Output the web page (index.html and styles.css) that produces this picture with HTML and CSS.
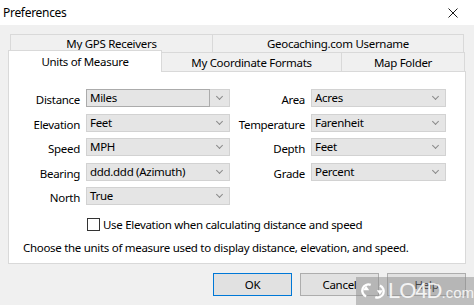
FILE: index.html
```html
<!DOCTYPE html>
<html lang="en">
<head>
    <meta charset="UTF-8">
    <title>Preferences</title>
    <link rel="stylesheet" href="styles.css">
</head>
<body>
    <div class="titlebar">
        <span class="title">Preferences</span>
        <svg class="close" width="10" height="10" viewBox="0 0 10 10">
            <path d="M0.5 0.5 L9.5 9.5 M9.5 0.5 L0.5 9.5" stroke="#1a1a1a" stroke-width="1" fill="none"/>
        </svg>
    </div>

    <div class="dialog">
        <div class="tab-row top">
            <div class="tab gps">My GPS Receivers</div>
            <div class="tab geo">Geocaching.com Username</div>
        </div>
        <div class="tab-row bottom">
            <div class="tab units active">Units of Measure</div>
            <div class="tab coords">My Coordinate Formats</div>
            <div class="tab folder">Map Folder</div>
        </div>

        <div class="panel">
            <div class="form">
                <div class="label">Distance</div>
                <div class="select focused"><span class="value">Miles</span><span class="arrow"></span></div>
                <div class="label">Area</div>
                <div class="select"><span class="value">Acres</span><span class="arrow"></span></div>

                <div class="label">Elevation</div>
                <div class="select"><span class="value">Feet</span><span class="arrow"></span></div>
                <div class="label">Temperature</div>
                <div class="select"><span class="value">Farenheit</span><span class="arrow"></span></div>

                <div class="label">Speed</div>
                <div class="select"><span class="value">MPH</span><span class="arrow"></span></div>
                <div class="label">Depth</div>
                <div class="select"><span class="value">Feet</span><span class="arrow"></span></div>

                <div class="label">Bearing</div>
                <div class="select"><span class="value">ddd.ddd (Azimuth)</span><span class="arrow"></span></div>
                <div class="label">Grade</div>
                <div class="select"><span class="value">Percent</span><span class="arrow"></span></div>

                <div class="label">North</div>
                <div class="select"><span class="value">True</span><span class="arrow"></span></div>
            </div>

            <div class="check-row">
                <span class="checkbox"></span>
                <span>Use Elevation when calculating distance and speed</span>
            </div>
            <p class="hint">Choose the units of measure used to display distance, elevation, and speed.</p>
        </div>

        <div class="buttons">
            <div class="btn default">OK</div>
            <div class="btn">Cancel</div>
            <div class="btn">Help</div>
        </div>
    </div>

    <div class="watermark">
        <svg width="34" height="22" viewBox="0 0 34 22">
            <path d="M14 3 A8 8 0 0 0 8 18" stroke="#fff" stroke-width="3" fill="none"/>
            <path d="M4 7 L8 1 L12 7 Z" fill="#fff" transform="translate(0 3)"/>
            <path d="M20 19 A8 8 0 0 0 26 4" stroke="#fff" stroke-width="3" fill="none"/>
            <path d="M22 12 L26 18 L30 12 Z" fill="#fff" transform="translate(0 -2)"/>
        </svg>
        <span class="wm-text">LO4D<small>.com</small></span>
    </div>
</body>
</html>
```

FILE: styles.css
```css
* {
    box-sizing: border-box;
}

body {
    margin: 0;
    width: 474px;
    height: 305px;
    overflow: hidden;
    position: relative;
    background-color: #f0f0f0;
    font-family: 'Noto Sans', 'Open Sans', sans-serif;
    font-size: 11.5px;
    letter-spacing: -0.3px;
    color: #000;
}

.titlebar {
    height: 25px;
    background-color: #fff;
    display: flex;
    align-items: center;
    justify-content: space-between;
    padding: 0 16px 0 3px;
}

.title {
    font-size: 12px;
}

.dialog {
    padding: 9px 8px 0 8px;
}

/* tabs */
.tab-row {
    display: flex;
}

.tab-row.top {
    height: 18px;
    margin-left: 2px;
    width: 454px;
}

.tab-row.bottom {
    height: 19px;
}

.tab {
    display: flex;
    align-items: center;
    justify-content: center;
    border: 1px solid #d9d9d9;
    border-bottom: none;
    background-color: #f0f0f0;
    white-space: nowrap;
}

.tab + .tab {
    margin-left: -1px;
}

.gps { width: 203px; }
.geo { width: 252px; }
.units { width: 154px; }
.coords { width: 181px; }
.folder { width: 124px; }

.tab.active {
    background-color: #fff;
    margin-top: -2px;
    margin-bottom: -1px;
    position: relative;
    z-index: 1;
}

/* panel */
.panel {
    height: 193px;
    background-color: #fff;
    border: 1px solid #d9d9d9;
    padding-top: 17px;
}

.form {
    display: grid;
    grid-template-columns: 71px 144px 69px 135px;
    grid-auto-rows: 18px;
    column-gap: 6px;
    row-gap: 6.5px;
}

.label {
    text-align: right;
    line-height: 18px;
    padding-top: 2px;
    white-space: nowrap;
}

.select {
    display: flex;
    background-color: #e5e5e5;
    border: 1px solid #d2d2d2;
}

.select .value {
    flex: 1;
    padding-left: 3px;
    line-height: 16px;
}

.select .arrow {
    width: 19px;
    position: relative;
}

.select .arrow::after {
    content: "";
    position: absolute;
    left: 7px;
    top: 4px;
    width: 4px;
    height: 4px;
    border-right: 1px solid #8a8a8a;
    border-bottom: 1px solid #8a8a8a;
    transform: rotate(45deg);
}

.select.focused .value {
    border: 1px solid #ababab;
    margin: -1px 0 -1px -1px;
    line-height: 16px;
    padding-left: 3px;
}

.check-row {
    display: flex;
    align-items: center;
    gap: 3px;
    margin: 13px 0 0 78px;
    height: 13px;
}

.checkbox {
    width: 13px;
    height: 13px;
    border: 1px solid #333;
    background-color: #fff;
}

.hint {
    margin: 9px 0 0 14px;
    line-height: 15px;
}

/* buttons */
.buttons {
    display: flex;
    justify-content: flex-end;
    gap: 8px;
    margin-top: 9px;
}

.btn {
    width: 79px;
    height: 23px;
    display: flex;
    align-items: center;
    justify-content: center;
    background-color: #e1e1e1;
    border: 1px solid #adadad;
}

.btn.default {
    border: 1px solid #0078d7;
    box-shadow: inset 0 0 0 1px #e1e1e1;
}

/* watermark sits over the buttons */
.watermark {
    position: absolute;
    left: 356px;
    top: 277px;
    width: 118px;
    height: 28px;
    background-color: rgba(140, 140, 140, 0.5);
    display: flex;
    align-items: center;
    gap: 2px;
    padding-left: 4px;
    color: rgba(255, 255, 255, 0.85);
    letter-spacing: 0;
}

.wm-text {
    font-family: 'Liberation Sans', sans-serif;
    font-size: 22px;
    letter-spacing: -1px;
}

.wm-text small {
    font-size: 15px;
    letter-spacing: 0;
}
```
